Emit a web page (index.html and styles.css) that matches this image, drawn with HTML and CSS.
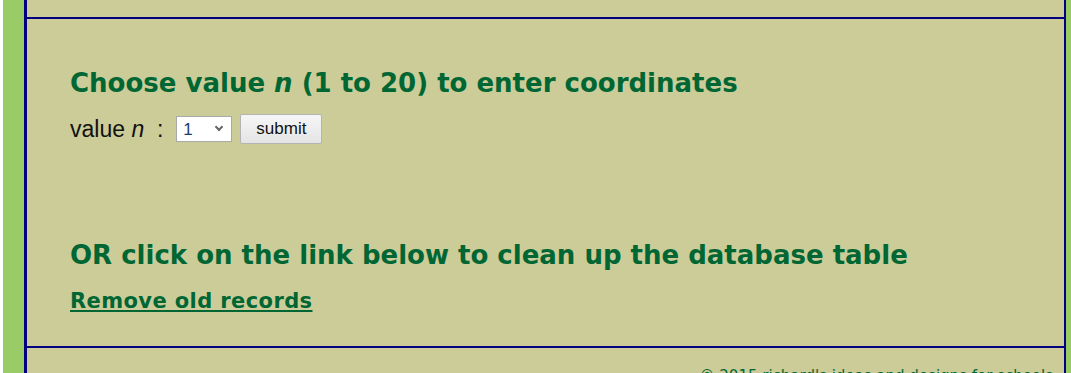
FILE: index.html
```html
<!DOCTYPE html>
<html lang="en">
<head>
<meta charset="UTF-8">
<title>Enter coordinates</title>
<meta name="viewport" content="width=device-width, initial-scale=1">
<link rel="stylesheet" href="styles.css">
</head>
<body>

<div class="wrap">
<div class="frame">

<div class="top"></div>

<div class="main">

<h2>Choose value <i>n</i> (1 to 20) to enter coordinates</h2>
<form class="pick">
<span>value <i>n</i>&nbsp; :</span>
<span class="sel">
<select name="n">
<option>1</option><option>2</option><option>3</option><option>4</option><option>5</option>
<option>6</option><option>7</option><option>8</option><option>9</option><option>10</option>
<option>11</option><option>12</option><option>13</option><option>14</option><option>15</option>
<option>16</option><option>17</option><option>18</option><option>19</option><option>20</option>
</select>
</span>
<button type="button">submit</button>
</form>

<h2 class="or">OR click on the link below to clean up the database table</h2>
<a class="clean" href="#">Remove old records</a>

</div>

<div class="foot">© 2015 richard's ideas and designs for schools</div>

</div>
</div>

</body>
</html>
```

FILE: styles.css
```css
body{
margin:0;
padding-left:3px;
background:#fff;
font-family:"Liberation Sans",Arial,sans-serif;
}

.wrap{
background:#99cc66;
padding:0 5px 0 21px;
height:373px;
overflow:hidden;
}

.frame{
background:#cccc99;
border-left:3px solid #000080;
border-right:2px solid #000080;
height:100%;
}

.top{
height:17px;
border-bottom:2px solid #000080;
}

.main{
height:329px;
box-sizing:border-box;
border-bottom:2px solid #000080;
padding:48px 0 0 43px;
}

h2{
font-family:"DejaVu Sans",Verdana,sans-serif;
font-size:26px;
font-weight:bold;
color:#006633;
margin:0;
line-height:32px;
}

.pick{
margin:15px 0 0 0;
height:30px;
font-size:23px;
color:#111;
display:flex;
align-items:center;
}

.sel{
position:relative;
margin-left:13px;
}

.sel select{
appearance:none;
-webkit-appearance:none;
display:block;
width:56px;
height:26px;
font-family:"Liberation Sans",Arial,sans-serif;
font-size:17px;
color:#1a3b73;
padding:0 0 0 6px;
background:#fff;
border:1px solid #a9a9a9;
border-radius:0;
}

.sel::after{
content:"";
position:absolute;
right:10px;
top:8px;
width:4px;
height:4px;
border-right:2px solid #666;
border-bottom:2px solid #666;
transform:rotate(45deg);
pointer-events:none;
}

.pick button{
margin-left:8px;
height:30px;
font-family:"Liberation Sans",Arial,sans-serif;
font-size:17px;
color:#111;
padding:0 15px;
background:linear-gradient(#f6f6f6,#e4e4e4);
border:1px solid #b4b4b4;
border-radius:2px;
}

.or{
margin-top:95px;
}

.clean{
display:inline-block;
margin-top:17px;
font-family:"DejaVu Sans",Tahoma,sans-serif;
font-weight:bold;
font-size:21px;
letter-spacing:0.4px;
line-height:26px;
color:#006633;
}

.foot{
text-align:right;
padding:19px 11px 0 0;
font-family:"DejaVu Sans",Verdana,sans-serif;
font-size:15px;
line-height:18px;
color:#006633;
}
```
